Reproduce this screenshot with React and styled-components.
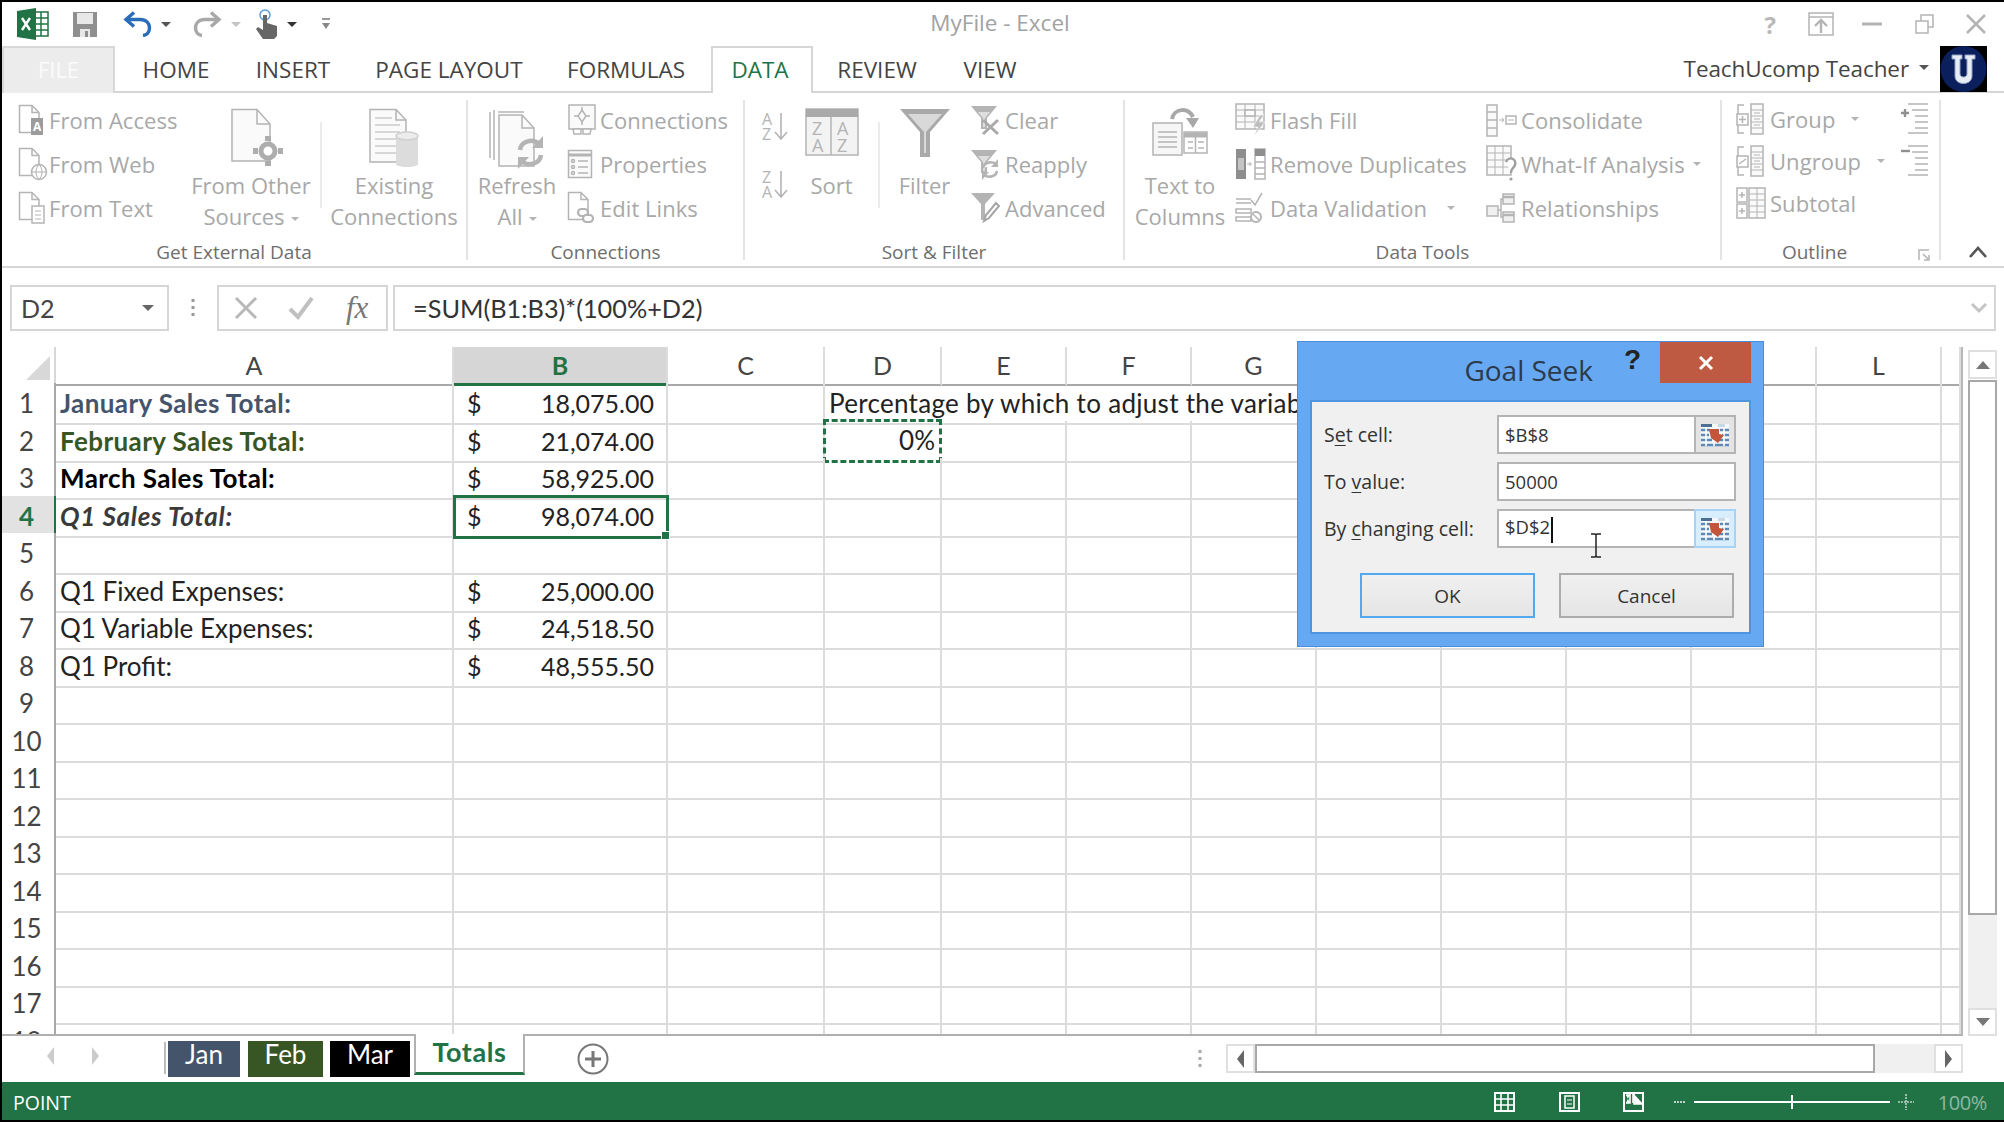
import React from "react";
import styled, { createGlobalStyle } from "styled-components";

const UI = `"Open Sans", "Noto Sans", sans-serif`;
const CELL = `Lato, "Open Sans", sans-serif`;
const GREEN = "#217346";
const GRAY = "#b4b4b4";

const COLS = ["A", "B", "C", "D", "E", "F", "G", "H", "I", "J", "K", "L", ""];
const WIDTHS = "54px 398px 214px 157px 117px 125px 125px 125px 125px 125px 125px 125px 125px 19px";

const Global = createGlobalStyle`
  html, body { margin: 0; padding: 0; background: #fff; overflow: hidden; }
`;

const Window = styled.div`
  position: relative;
  width: 2004px;
  height: 1122px;
  box-sizing: border-box;
  border-top: 2px solid #000;
  border-bottom: 2px solid #000;
  border-left: 2px solid #000;
  background: #fff;
  display: flex;
  flex-direction: column;
  font-family: ${UI};
  overflow: hidden;
`;

/* ---------- title bar ---------- */
const TitleBar = styled.div`
  height: 44px;
  display: grid;
  grid-template-columns: 1fr auto 1fr;
  align-items: center;
`;
const Qat = styled.div`
  display: flex;
  align-items: center;
  padding-left: 15px;
`;
const QatItem = styled.div`
  display: flex;
  margin-left: ${(p) => p.$gap || 0}px;
`;
const Mirror = styled.span`
  display: flex;
  transform: scaleX(-1);
`;
const DocTitle = styled.div`
  font-size: 22.5px;
  color: #a2a2a2;
  padding-right: 6px;
  margin-top: -3px;
`;
const WinControls = styled.div`
  display: flex;
  align-items: center;
  justify-content: flex-end;
  padding-right: 18px;
`;
const WinBtn = styled.div`
  display: flex;
  margin-left: ${(p) => p.$gap || 0}px;
  font-size: 24px;
  font-weight: 700;
  color: #b8b8b8;
`;

/* ---------- ribbon tabs ---------- */
const TabRow = styled.div`
  height: 47px;
  box-sizing: border-box;
  border-bottom: 2px solid #d6d6d6;
  display: flex;
  align-items: stretch;
`;
const FileTab = styled.div`
  width: 113px;
  box-sizing: border-box;
  height: 47px;
  background: #ececec;
  border: 2px solid #d8d8d8;
  border-bottom: none;
  color: #fbfbfb;
  font-size: 22px;
  line-height: 42px;
  text-align: center;
`;
const Tab = styled.div`
  width: ${(p) => p.$w}px;
  box-sizing: border-box;
  height: ${(p) => (p.$active ? 47 : 45)}px;
  padding-right: ${(p) => p.$pr || 0}px;
  text-align: center;
  font-size: 22.5px;
  line-height: ${(p) => (p.$active ? 43 : 47)}px;
  color: ${(p) => (p.$active ? GREEN : "#444")};
  background: #fff;
  border: ${(p) => (p.$active ? "2px solid #d6d6d6" : "none")};
  border-bottom: none;
  position: relative;
  z-index: 1;
`;
const User = styled.div`
  margin-left: auto;
  display: flex;
  align-items: center;
  height: 45px;
  font-size: 22.5px;
  letter-spacing: -0.1px;
  color: #444;
`;
const UserCaret = styled.span`
  width: 0;
  height: 0;
  margin: 0 11px 2px 10px;
  border-left: 5px solid transparent;
  border-right: 5px solid transparent;
  border-top: 5px solid #555;
`;
const Avatar = styled.div`
  width: 47px;
  height: 46px;
  margin-right: 17px;
  background: #000;
  display: flex;
`;

/* ---------- ribbon ---------- */
const Ribbon = styled.div`
  height: 175px;
  box-sizing: border-box;
  padding-top: 7px;
  border-bottom: 2px solid #d6d6d6;
  display: flex;
  align-items: flex-start;
`;
const Group = styled.div`
  width: ${(p) => p.$w}px;
  height: 160px;
  box-sizing: border-box;
  border-right: 2px solid #e4e4e4;
  display: flex;
  flex-direction: column;
  position: relative;
`;
const GroupBody = styled.div`
  height: 136px;
  display: flex;
  align-items: flex-start;
  padding-left: ${(p) => p.$pad || 0}px;
`;
const GroupLabel = styled.div`
  height: 24px;
  line-height: 32px;
  text-align: center;
  font-size: 19px;
  color: #6e6e6e;
  padding-right: ${(p) => p.$right || 0}px;
`;
const Launcher = styled.div`
  position: absolute;
  right: 9px;
  bottom: -1px;
  display: flex;
`;
const SmallCol = styled.div`
  width: ${(p) => p.$w}px;
  margin-left: ${(p) => p.$ml || 0}px;
  margin-top: -2px;
  flex-shrink: 0;
  display: flex;
  flex-direction: column;
`;
const SmallRow = styled.div`
  height: ${(p) => p.$h || 44}px;
  display: flex;
  align-items: center;
  white-space: nowrap;
  font-size: 22px;
  letter-spacing: 0.05px;
  color: #a8a8a8;
`;
const SmallIcon = styled.div`
  width: ${(p) => p.$w}px;
  flex-shrink: 0;
  display: flex;
`;
const Large = styled.div`
  width: ${(p) => p.$w}px;
  margin-left: ${(p) => p.$ml || 0}px;
  flex-shrink: 0;
  display: flex;
  flex-direction: column;
  align-items: center;
  font-size: 22px;
  line-height: 31px;
  color: #a8a8a8;
  text-align: center;
  white-space: nowrap;
`;
const LargeIcon = styled.div`
  height: 70px;
  padding: 8px 0 0 ${(p) => p.$shift || 0}px;
  box-sizing: border-box;
  display: flex;
  align-items: flex-start;
  justify-content: center;
`;
const VSep = styled.div`
  width: 2px;
  height: 86px;
  margin: 22px ${(p) => p.$r}px 0 ${(p) => p.$l}px;
  background: #ebebeb;
  flex-shrink: 0;
`;
const Caret = styled.span`
  display: inline-block;
  width: 0;
  height: 0;
  vertical-align: middle;
  margin-left: ${(p) => p.$ml ?? 6}px;
  border-left: ${(p) => p.$s || 4}px solid transparent;
  border-right: ${(p) => p.$s || 4}px solid transparent;
  border-top: ${(p) => p.$s || 4}px solid ${(p) => p.$c || "#b4b4b4"};
`;
const Collapse = styled.div`
  flex: 1;
  height: 160px;
  display: flex;
  align-items: flex-end;
  justify-content: center;
  padding-left: 10px;
  padding-bottom: 2px;
  box-sizing: border-box;
`;

/* ---------- formula bar ---------- */
const FormulaBar = styled.div`
  height: 79px;
  box-sizing: border-box;
  padding: 17px 8px 0 8px;
  display: flex;
  align-items: flex-start;
`;
const NameBox = styled.div`
  width: 159px;
  height: 46px;
  box-sizing: border-box;
  border: 2px solid #d6d6d6;
  display: flex;
  align-items: center;
  justify-content: space-between;
  padding: 0 13px 0 9px;
  font-family: ${CELL};
  font-size: 25px;
  color: #444;
`;
const Dots = styled.div`
  width: 48px;
  height: 46px;
  display: flex;
  align-items: center;
  justify-content: center;
`;
const FxBox = styled.div`
  width: 171px;
  height: 46px;
  box-sizing: border-box;
  border: 2px solid #d6d6d6;
  display: flex;
  align-items: center;
  padding-left: 15px;
  gap: 30px;
`;
const FxText = styled.span`
  font-family: "Liberation Serif", serif;
  font-style: italic;
  font-size: 31px;
  color: #777;
  margin-left: 2px;
`;
const FormulaInput = styled.div`
  flex: 1;
  height: 46px;
  margin-left: 5px;
  box-sizing: border-box;
  border: 2px solid #d6d6d6;
  display: flex;
  align-items: center;
  justify-content: space-between;
  padding: 0 7px 0 18px;
  font-family: ${CELL};
  font-size: 25.3px;
  color: #333;
`;

/* ---------- sheet ---------- */
const SheetArea = styled.div`
  height: 689px;
  display: flex;
`;
const Sheet = styled.div`
  width: 1961px;
  box-sizing: border-box;
  border-right: 2px solid #b8b8b8;
  border-bottom: 2px solid #b0b0b0;
  overflow: hidden;
  font-family: ${CELL};
  font-size: 26px;
  color: #222;
`;
const SheetRow = styled.div`
  display: grid;
  grid-template-columns: ${WIDTHS};
  height: ${(p) => p.$h || 37.5}px;
`;
const Corner = styled.div`
  border-bottom: 2px solid #a8a8a8;
  border-right: 2px solid #d8d8d8;
  display: flex;
  align-items: flex-end;
  justify-content: flex-end;
  padding: 0 4px 4px 0;
`;
const ColHead = styled.div`
  box-sizing: border-box;
  border-right: 2px solid #dcdcdc;
  border-bottom: ${(p) => (p.$on ? `3px solid ${GREEN}` : "2px solid #a8a8a8")};
  background: ${(p) => (p.$on ? "#d6d6d6" : "#fff")};
  color: ${(p) => (p.$on ? GREEN : "#444")};
  font-weight: ${(p) => (p.$on ? 700 : 400)};
  text-align: center;
  line-height: 36px;
  font-size: 25px;
`;
const RowHead = styled.div`
  box-sizing: border-box;
  border-right: 2px solid ${(p) => (p.$on ? GREEN : "#a8a8a8")};
  border-bottom: 2px solid #dcdcdc;
  background: ${(p) => (p.$on ? "#e2e2e2" : "#fff")};
  color: ${(p) => (p.$on ? GREEN : "#444")};
  font-weight: ${(p) => (p.$on ? 700 : 400)};
  text-align: center;
  line-height: 40px;
  padding-right: 3px;
`;
const Cell = styled.div`
  box-sizing: border-box;
  border-right: 2px solid #dcdcdc;
  border-bottom: 2px solid #dcdcdc;
  grid-column: ${(p) => (p.$span ? `span ${p.$span}` : "auto")};
  line-height: 40px;
  padding: 0 4px;
  white-space: nowrap;
  overflow: hidden;
  font-weight: ${(p) => (p.$bold ? 700 : 400)};
  font-style: ${(p) => (p.$italic ? "italic" : "normal")};
  letter-spacing: ${(p) => p.$ls || 0}px;
  color: ${(p) => p.$color || "#222"};
  text-align: ${(p) => p.$align || "left"};
`;
const MoneyCell = styled(Cell)`
  display: flex;
  justify-content: space-between;
  padding: 0 12px 0 13px;
  font-size: 25px;
  overflow: visible;
  position: relative;
  ${(p) =>
    p.$sel &&
    `
    outline: 3px solid ${GREEN};
    outline-offset: -2px;
    z-index: 2;
    &::after {
      content: "";
      position: absolute;
      right: -4px;
      bottom: -4px;
      width: 7px;
      height: 7px;
      background: ${GREEN};
      border: 1px solid #fff;
    }
  `}
`;
const CopyCell = styled(Cell)`
  border: 3px dashed ${GREEN};
  text-align: right;
  line-height: 37px;
  margin: -2px 0 0 -2px;
  width: calc(100% + 2px);
  height: calc(100% + 2px);
`;

const VScroll = styled.div`
  flex: 1;
  display: flex;
  flex-direction: column;
  padding: 3px 7px 0 5px;
`;
const ScrollBtn = styled.div`
  height: ${(p) => p.$h || 29}px;
  box-sizing: border-box;
  border: 2px solid #e0e0e0;
  display: flex;
  align-items: center;
  justify-content: center;
  flex-shrink: 0;
`;
const VThumb = styled.div`
  height: 535px;
  flex-shrink: 0;
  margin-top: 1px;
  box-sizing: border-box;
  border: 2px solid #a8a8a8;
  background: #fff;
`;
const VTrack = styled.div`
  flex: 1;
  background: #f0f0f0;
`;
const Tri = styled.span`
  width: 0;
  height: 0;
  ${(p) =>
    p.$dir === "up"
      ? `border-left:7px solid transparent;border-right:7px solid transparent;border-bottom:8px solid #777;`
      : p.$dir === "down"
      ? `border-left:7px solid transparent;border-right:7px solid transparent;border-top:8px solid #777;`
      : p.$dir === "left"
      ? `border-top:9px solid transparent;border-bottom:9px solid transparent;border-right:7px solid ${p.$c || "#666"};`
      : `border-top:9px solid transparent;border-bottom:9px solid transparent;border-left:7px solid ${p.$c || "#666"};`}
`;

/* ---------- sheet tabs ---------- */
const TabBar = styled.div`
  height: 46px;
  display: flex;
  align-items: flex-start;
  font-family: ${CELL};
`;
const NavArrows = styled.div`
  width: 162px;
  height: 40px;
  padding-left: 45px;
  box-sizing: border-box;
  display: flex;
  align-items: center;
  gap: 38px;
`;
const TabSep = styled.div`
  width: 2px;
  height: 32px;
  margin-top: 6px;
  background: #bbb;
`;
const SheetTab = styled.div`
  width: ${(p) => p.$w}px;
  height: 36px;
  margin: 5px 0 0 ${(p) => p.$ml}px;
  box-sizing: border-box;
  background: ${(p) => p.$bg};
  color: #fff;
  font-size: 26px;
  line-height: 27px;
  text-align: center;
`;
const ActiveTab = styled.div`
  width: 111px;
  height: 41px;
  margin: -2px 0 0 4px;
  box-sizing: border-box;
  background: #fff;
  border-left: 2px solid #b0b0b0;
  border-right: 2px solid #b0b0b0;
  border-bottom: 3px solid ${GREEN};
  color: ${GREEN};
  font-weight: 700;
  font-size: 27px;
  letter-spacing: 0.6px;
  line-height: 36px;
  text-align: center;
`;
const AddSheet = styled.div`
  margin: 7px 0 0 52px;
  display: flex;
`;
const HScrollWrap = styled.div`
  margin-left: auto;
  display: flex;
  align-items: center;
  height: 29px;
  margin-top: 8px;
  margin-right: 41px;
`;
const Grip = styled.div`
  display: flex;
  margin-right: 24px;
`;
const HBtn = styled.div`
  width: 29px;
  height: 29px;
  box-sizing: border-box;
  border: 2px solid #e0e0e0;
  display: flex;
  align-items: center;
  justify-content: center;
`;
const HThumb = styled.div`
  width: 620px;
  height: 29px;
  box-sizing: border-box;
  border: 2px solid #a8a8a8;
  background: #fff;
`;
const HTrack = styled.div`
  width: 59px;
  height: 29px;
  background: #f0f0f0;
`;

/* ---------- status bar ---------- */
const StatusBar = styled.div`
  flex: 1;
  background: ${GREEN};
  color: #fff;
  display: flex;
  align-items: center;
  padding: 2px 0 0 11px;
  font-size: 19.5px;
`;
const StatusRight = styled.div`
  margin-left: auto;
  display: flex;
  align-items: center;
  padding-right: 17px;
`;
const StatusIcon = styled.div`
  display: flex;
  margin-left: ${(p) => p.$gap || 0}px;
`;
const Slider = styled.div`
  width: 196px;
  height: 2px;
  margin-left: 8px;
  background: #fff;
  display: flex;
  align-items: center;
  justify-content: center;
`;
const SliderTick = styled.span`
  width: 2px;
  height: 14px;
  background: #fff;
`;
const Zoom = styled.div`
  margin-left: 24px;
  font-size: 20px;
  letter-spacing: -0.4px;
  color: #8fb8a2;
`;

/* ---------- goal seek dialog ---------- */
const Dialog = styled.div`
  position: absolute;
  left: 1295px;
  top: 339px;
  width: 467px;
  height: 306px;
  box-sizing: border-box;
  background: #66a9f2;
  border: 1px solid #4b8fdc;
  padding: 0 12px 12px 12px;
  display: flex;
  flex-direction: column;
  z-index: 5;
`;
const DialogHead = styled.div`
  height: 58px;
  flex-shrink: 0;
  display: flex;
  align-items: flex-start;
`;
const DialogTitle = styled.div`
  width: 283px;
  text-align: right;
  padding-top: 9px;
  white-space: nowrap;
  font-size: 28px;
  color: #2c3a4a;
`;
const DialogHelp = styled.div`
  margin: 0 0 0 31px;
  height: 36px;
  line-height: 36px;
  font-family: "Liberation Sans", sans-serif;
  font-size: 28px;
  font-weight: 700;
  color: #222;
`;
const DialogClose = styled.div`
  margin: 0 0 0 auto;
  width: 91px;
  height: 41px;
  background: #bd5a41;
  display: flex;
  align-items: center;
  justify-content: center;
`;
const DialogBody = styled.div`
  flex: 1;
  background: #f0f0f0;
  border: 2px solid #4f94e0;
  padding: 13px 13px 0 12px;
  display: flex;
  flex-direction: column;
  font-size: 19.5px;
  color: #333;
`;
const Field = styled.div`
  height: 39px;
  margin-bottom: 8px;
  display: flex;
  align-items: center;
`;
const FieldLabel = styled.div`
  width: 173px;
  flex-shrink: 0;
  u { text-underline-offset: 3px; }
`;
const FieldInput = styled.div`
  flex: 1;
  height: 39px;
  box-sizing: border-box;
  border: 2px solid #b4b4b4;
  background: #fff;
  display: flex;
  align-items: center;
  justify-content: space-between;
  padding-left: 6px;
  font-size: 18.5px;
  position: relative;
`;
const RefBtn = styled.div`
  width: 42px;
  height: 39px;
  margin: -2px -2px -2px 0;
  box-sizing: border-box;
  border: 2px solid ${(p) => (p.$on ? "#a5d2f5" : "#b4b4b4")};
  background: ${(p) => (p.$on ? "#d8eefd" : "#e4e4e4")};
  display: flex;
  align-items: center;
  justify-content: center;
`;
const TextCaret = styled.span`
  display: inline-block;
  width: 1.5px;
  height: 26px;
  background: #111;
  vertical-align: middle;
  margin-left: 1px;
`;
const IBeam = styled.div`
  position: absolute;
  left: 91px;
  top: 22px;
  display: flex;
  z-index: 2;
`;
const ButtonRow = styled.div`
  display: flex;
  gap: 24px;
  margin: 17px 0 0 36px;
`;
const DlgButton = styled.div`
  width: 175px;
  height: 45px;
  box-sizing: border-box;
  border: 2px solid ${(p) => (p.$primary ? "#54a9ee" : "#acacac")};
  background: linear-gradient(#f0f0f0, #e5e5e5);
  text-align: center;
  line-height: 43px;
  font-size: 19px;
  color: #333;
`;

/* ---------- icons ---------- */
const Ico = styled.svg`
  display: block;
  flex-shrink: 0;
  overflow: visible;
  fill: none;
  stroke: ${(p) => p.$c || GRAY};
  stroke-width: 1.5;
`;
const I = ({ w, h, children, c }) => (
  <Ico width={w} height={h} viewBox={`0 0 ${w} ${h}`} $c={c}>
    {children}
  </Ico>
);
const Doc = (
  <>
    <path d="M1.5 1.5H14L21 8.5V28.5H1.5Z" fill="#fff" />
    <path d="M14 1.5V8.5H21" />
  </>
);

const ExcelLogo = () => (
  <svg width="32" height="32" viewBox="0 0 32 32">
    <rect x="12" y="4" width="19" height="24" fill="#fff" stroke="#217346" strokeWidth="1.5" />
    <path d="M17 4V28M24 4V28M12 10H31M12 16H31M12 22H31" stroke="#217346" strokeWidth="1.5" />
    <path d="M0 3L19 0V32L0 29Z" fill="#217346" />
    <path d="M5 10L13 22M13 10L5 22" stroke="#fff" strokeWidth="2.4" />
  </svg>
);
const SaveIcon = () => (
  <svg width="24" height="25" viewBox="0 0 24 25">
    <path d="M0 0H24V25H0Z" fill="#8f8f8f" />
    <rect x="4" y="1" width="16" height="11" fill="#e8e8e8" />
    <rect x="7" y="17" width="10" height="8" fill="#e8e8e8" />
    <rect x="12" y="19" width="3" height="6" fill="#8f8f8f" />
  </svg>
);
const UndoIcon = ({ c }) => (
  <svg width="29" height="26" viewBox="0 0 29 26" fill="none" stroke={c} strokeWidth="3.4">
    <path d="M11 1.5L3 8.5L11 15.5" />
    <path d="M3 8.5H17C23 8.5 26.5 12 26.5 17C26.5 21 24 24 20 24.5" />
  </svg>
);
const TouchIcon = () => (
  <svg width="24" height="30" viewBox="0 0 24 30">
    <circle cx="10" cy="6" r="5" fill="none" stroke="#5b9bd5" strokeWidth="1.5" />
    <path d="M8 6H12V14L22 17V27L19 30H8L1 20L3 18L8 21Z" fill="#666" />
  </svg>
);
const QatMore = () => (
  <svg width="10" height="14" viewBox="0 0 10 14">
    <path d="M1 2H9" stroke="#777" strokeWidth="1.5" />
    <path d="M1 6H9L5 12Z" fill="#888" />
  </svg>
);

const FromAccess = () => (
  <I w={30} h={32}>
    {Doc}
    <rect x="13" y="14" width="12" height="17" fill="#9c9c9c" stroke="none" />
    <text x="15" y="27" fontSize="12" fontWeight="700" fill="#fff" stroke="none" fontFamily="Open Sans">A</text>
  </I>
);
const FromWeb = () => (
  <I w={30} h={34}>
    {Doc}
    <circle cx="21" cy="25" r="7.5" fill="#fff" />
    <path d="M13.5 25H28.5M21 17.5C17 21 17 29 21 32.5C25 29 25 21 21 17.5" strokeWidth="1" />
  </I>
);
const FromText = () => (
  <I w={30} h={34}>
    {Doc}
    <rect x="14" y="15" width="12" height="17" fill="#fff" />
    <path d="M17 20H23M17 24H23M17 28H23" strokeWidth="1" />
  </I>
);
const OtherSources = () => (
  <I w={54} h={60}>
    <path d="M2 1.5H27L40 16V53H2Z" fill="#fafafa" />
    <path d="M27 1.5V16H40" />
    <circle cx="38" cy="43" r="7" fill="#fff" stroke="#adadad" strokeWidth="5" />
    <path d="M38 28V33M38 53V58M23 43H28M48 43H53" stroke="#adadad" strokeWidth="6" />
  </I>
);
const Existing = () => (
  <I w={52} h={60}>
    <path d="M2 1.5H28L38 12V54H2Z" fill="#fafafa" />
    <path d="M28 1.5V12H38" />
    <path d="M7 10H24M7 17H32M7 24H32M7 31H32M7 38H28M7 45H28" strokeWidth="1.2" />
    <path d="M28 28C28 23 50 23 50 28V56C50 60 28 60 28 56Z" fill="#dcdcdc" stroke="none" />
    <ellipse cx="39" cy="28" rx="11" ry="4" fill="#ececec" stroke="#d0d0d0" />
  </I>
);
const RefreshAll = () => (
  <I w={58} h={62}>
    <path d="M2 4V50M6 2V52" />
    <path d="M10 4H36" />
    <path d="M11 7H34L46 20V58H11Z" fill="#fafafa" />
    <path d="M34 7V20H46" />
    <path d="M32 42C33 33 45 30 51 36" stroke="#b4b4b4" strokeWidth="4.5" />
    <path d="M55 28V40H44Z" fill="#b4b4b4" stroke="none" />
    <path d="M53 47C52 56 40 59 34 53" stroke="#b4b4b4" strokeWidth="4.5" />
    <path d="M30 61V49H41Z" fill="#b4b4b4" stroke="none" />
  </I>
);
const ConnIcon = () => (
  <I w={30} h={34}>
    <rect x="2" y="2" width="26" height="24" fill="#fafafa" />
    <path d="M15 7L19 13L15 19L11 13Z" />
    <path d="M15 4V7M15 19V22M7 13H11M19 13H23" />
    <path d="M6 26H14V31H7ZM16 26H24L23 31H16Z" fill="#fff" />
  </I>
);
const PropsIcon = () => (
  <I w={26} h={30}>
    <rect x="1.5" y="1.5" width="23" height="27" fill="#fafafa" />
    <path d="M1.5 6H24.5" strokeWidth="3" />
    <path d="M11 12H21M11 18H21M11 24H21" />
    <circle cx="6" cy="12" r="1.5" />
    <circle cx="6" cy="18" r="1.5" />
    <circle cx="6" cy="24" r="1.5" />
  </I>
);
const LinksIcon = () => (
  <I w={28} h={34}>
    {Doc}
    <rect x="11" y="18" width="10" height="7" rx="3.5" fill="#fff" strokeWidth="2.2" />
    <rect x="16" y="24" width="10" height="7" rx="3.5" fill="#fff" strokeWidth="2.2" />
  </I>
);
const SortLetters = ({ t, b }) => (
  <I w={27} h={30}>
    <text x="0" y="13" fontSize="16" fill="#b4b4b4" stroke="none" fontFamily="Open Sans">{t}</text>
    <text x="0" y="28" fontSize="16" fill="#b4b4b4" stroke="none" fontFamily="Open Sans">{b}</text>
    <path d="M19 1V26M13 20L19 27L25 20" strokeWidth="1.6" />
  </I>
);
const SortIcon = () => (
  <I w={54} h={48}>
    <rect x="1" y="1" width="52" height="46" fill="#f3f3f3" />
    <rect x="1" y="1" width="52" height="8" fill="#aaaaaa" stroke="none" />
    <path d="M26 9V47" />
    <text x="7" y="27" fontSize="18" fill="#b4b4b4" stroke="none" fontFamily="Open Sans">Z</text>
    <text x="7" y="44" fontSize="18" fill="#b4b4b4" stroke="none" fontFamily="Open Sans">A</text>
    <text x="32" y="27" fontSize="18" fill="#b4b4b4" stroke="none" fontFamily="Open Sans">A</text>
    <text x="32" y="44" fontSize="18" fill="#b4b4b4" stroke="none" fontFamily="Open Sans">Z</text>
  </I>
);
const FunnelLarge = () => (
  <I w={52} h={50}>
    <path d="M1 1H51L31 24V49H21V24Z" fill="#a9a9a9" stroke="none" />
    <path d="M9 6H43L27 24V45H25V24Z" fill="#d9d9d9" stroke="none" />
  </I>
);
const SmallFunnel = (
  <>
    <path d="M1 1H27L17 13V24H11V13Z" fill="#b4b4b4" stroke="none" />
    <path d="M8 7H20L15 13V22H13V13Z" fill="#dedede" stroke="none" />
  </>
);
const ClearIcon = () => (
  <I w={30} h={30}>
    {SmallFunnel}
    <path d="M13 15L28 29M28 15L13 29" strokeWidth="3" stroke="#aaa" />
  </I>
);
const ReapplyIcon = () => (
  <I w={30} h={30}>
    {SmallFunnel}
    <path d="M13 19C14 13 22 12 26 15M27 22C26 28 18 29 14 26" stroke="#b4b4b4" strokeWidth="2.6" fill="#fff" />
    <path d="M28 10V18H21ZM12 31V23H19Z" fill="#b4b4b4" stroke="none" />
  </I>
);
const AdvancedIcon = () => (
  <I w={30} h={32}>
    <path d="M1 1H25L15 12V28H11V12Z" fill="#b4b4b4" stroke="none" />
    <path d="M14 29L16 23L26 11L29 14L19 26Z" fill="#fff" stroke="#a5a5a5" strokeWidth="2" />
  </I>
);
const TextColumns = () => (
  <I w={56} h={48}>
    <path d="M1 15H30V47H1Z" fill="#f6f6f6" />
    <path d="M6 24H25M6 29H25M6 34H25M6 39H25" />
    <path d="M20 11C22 0 36 -1 41 9" strokeWidth="4" stroke="#a8a8a8" />
    <path d="M34 10H47L41 20Z" fill="#a8a8a8" stroke="none" />
    <rect x="32" y="24" width="23" height="21" fill="#fff" />
    <path d="M32 27H55" strokeWidth="5" />
    <path d="M43.5 24V45M36 34H41M46 34H52M36 40H41M46 40H52" />
  </I>
);
const FlashFill = () => (
  <I w={30} h={34}>
    <rect x="1" y="1" width="28" height="25" fill="#fafafa" />
    <path d="M1 7H29M1 13H29M1 19H29M10 1V26M20 1V26" strokeWidth="1" />
    <rect x="10" y="7" width="10" height="6" fill="#fff" />
    <path d="M25 12L18 24H23L19 33L30 19H24L29 12Z" fill="#bdbdbd" stroke="#fff" strokeWidth="0.6" />
  </I>
);
const RemoveDup = () => (
  <I w={30} h={32}>
    <rect x="1" y="1" width="10" height="30" fill="#8e8e8e" stroke="none" />
    <rect x="3" y="10" width="6" height="12" fill="#c4c4c4" stroke="none" />
    <path d="M12 16H17M15 14V18" strokeWidth="1" />
    <rect x="20" y="1" width="10" height="30" fill="#fff" />
    <rect x="20" y="1" width="10" height="7" fill="#8e8e8e" stroke="none" />
    <path d="M20 14H30M20 20H30M20 26H30" />
  </I>
);
const DataVal = () => (
  <I w={28} h={32}>
    <path d="M1 7H16M1 11H16" />
    <path d="M16 8L20 13L27 1" strokeWidth="1.5" />
    <rect x="1" y="17" width="15" height="4" />
    <rect x="1" y="25" width="15" height="4" />
    <circle cx="21" cy="25" r="5" strokeWidth="2" />
    <path d="M18 22L24 28" strokeWidth="1.5" />
  </I>
);
const Consolidate = () => (
  <I w={31} h={33}>
    <rect x="1" y="1" width="10" height="31" fill="#fafafa" />
    <path d="M1 8H11M1 16H11M1 24H11" />
    <path d="M13 16H18M16 14L18 16L16 18" strokeWidth="1" />
    <rect x="20" y="12" width="10" height="8" />
    <path d="M22 16H28" strokeWidth="1" />
  </I>
);
const WhatIf = () => (
  <I w={31} h={38}>
    <rect x="1" y="1" width="24" height="29" fill="#fafafa" />
    <path d="M1 8H25M1 15H25M1 22H25M9 1V30M17 1V30" strokeWidth="1" />
    <path d="M20 17C22 11 31 13 29 20C28 23 25 23 25 28" stroke="#9f9f9f" strokeWidth="2.4" fill="#fff" />
    <circle cx="25" cy="34" r="1.6" fill="#9f9f9f" stroke="none" />
  </I>
);
const RelIcon = () => (
  <I w={30} h={30}>
    <rect x="1" y="13" width="11" height="10" fill="#f0f0f0" />
    <rect x="17" y="1" width="11" height="10" fill="#f0f0f0" />
    <rect x="17" y="19" width="11" height="10" fill="#f0f0f0" />
    <path d="M12 17H15V6H17M15 17V24H17" />
    <path d="M17 4H28M17 22H28" strokeWidth="2.5" />
  </I>
);
const GroupIcon = ({ dash }) => (
  <I w={28} h={32}>
    <path d="M8 2H2V30H8" />
    <rect x="1" y="11" width="11" height="11" fill="#fff" />
    <path d={dash ? "M3 19L10 14" : "M3 16.5H10M6.5 13V20"} />
    <rect x="15" y="1" width="12" height="30" fill="#fafafa" />
    <path d="M15 7H27M15 13H27M15 19H27M15 25H27M18 10H24M18 16H24M18 22H24" strokeWidth="1" />
  </I>
);
const SubtotalIcon = () => (
  <I w={30} h={32}>
    <rect x="1" y="1" width="10" height="14" fill="#fff" />
    <rect x="1" y="17" width="10" height="14" fill="#fff" />
    <path d="M3 8H9M6 5V11M3 24H9M6 21V27" />
    <rect x="13" y="1" width="16" height="30" fill="#fafafa" />
    <path d="M13 7H29M13 13H29M13 19H29M13 25H29M21 1V31" strokeWidth="1" />
  </I>
);
const DetailIcon = ({ plus }) => (
  <I w={29} h={32}>
    <path d={plus ? "M1 10H9M5 6V14" : "M1 6H10"} stroke="#8f8f8f" strokeWidth="2.4" />
    <path d="M8 1H28M12 7H28M15 13H28M15 19H28M15 25H28M8 30H28" />
  </I>
);
const LauncherIcon = () => (
  <I w={12} h={12}>
    <path d="M1 11V1H11" />
    <path d="M5 5L10 10M11 6V11H6" />
  </I>
);
const RefIcon = () => (
  <svg width="30" height="26" viewBox="0 0 30 26">
    <rect x="1" y="2" width="28" height="22" fill="#f4f8fb" />
    <path d="M1 8H10M20 8H29M1 13H9M22 13H29M1 18H12M19 18H29M1 23H29" stroke="#5f8ab5" strokeWidth="2.4" />
    <path d="M6 3V24M24 3V24M14 19V24" stroke="#fff" strokeWidth="1.6" />
    <rect x="1" y="2" width="11" height="3" fill="#4d6f94" />
    <rect x="18" y="2" width="7" height="3" fill="#c9d8e6" />
    <path d="M9 7H19V12L24 13L18 21L11 16Z" fill="#c4543a" />
  </svg>
);
const Avatarsvg = () => (
  <svg width="47" height="46" viewBox="0 0 47 46">
    <ellipse cx="23.5" cy="23" rx="23" ry="23" fill="#0b1f5c" />
    <path d="M12 9H22V13H20V28C20 32 27 32 27 28V13H25V9H35V13H32V30C32 40 15 40 15 30V13H12Z" fill="#e8edf5" stroke="#8fa1c5" />
  </svg>
);

const Money = ({ v, sel }) => (
  <MoneyCell $sel={sel}>
    <span>$</span>
    <span>{v}</span>
  </MoneyCell>
);

const FIXED = {
  1: ["January Sales Total:", { $bold: true, $ls: 0.4, $color: "#44546a" }, "18,075.00"],
  2: ["February Sales Total:", { $bold: true, $ls: 0.4, $color: "#375623" }, "21,074.00"],
  3: ["March Sales Total:", { $bold: true, $ls: 0.4, $color: "#000" }, "58,925.00"],
  4: ["Q1 Sales Total:", { $bold: true, $italic: true, $ls: 0.7, $color: "#3a3a3a" }, "98,074.00"],
  6: ["Q1 Fixed Expenses:", {}, "25,000.00"],
  7: ["Q1 Variable Expenses:", {}, "24,518.50"],
  8: ["Q1 Profit:", {}, "48,555.50"],
};

function Rows() {
  const rows = [];
  for (let n = 1; n <= 18; n++) {
    const d = FIXED[n];
    rows.push(
      <SheetRow key={n}>
        <RowHead $on={n === 4}>{n}</RowHead>
        <Cell {...(d ? d[1] : {})}>{d ? d[0] : ""}</Cell>
        {d ? <Money v={d[2]} sel={n === 4} /> : <Cell />}
        <Cell />
        {n === 1 ? (
          <Cell $span={6} $ls={0.3}>Percentage by which to adjust the variable expenses</Cell>
        ) : n === 2 ? (
          <CopyCell>0%</CopyCell>
        ) : (
          <Cell />
        )}
        {n !== 1 && Array.from({ length: 5 }, (_, i) => <Cell key={i} />)}
        <Cell />
        <Cell />
        <Cell />
        <Cell />
      </SheetRow>
    );
  }
  return rows;
}

export default function App() {
  return (
    <Window>
      <Global />
      <TitleBar>
        <Qat>
          <QatItem><ExcelLogo /></QatItem>
          <QatItem $gap={24}><SaveIcon /></QatItem>
          <QatItem $gap={26}><UndoIcon c="#2b6cb8" /></QatItem>
          <Caret $ml={9} $s={5} $c="#555" />
          <QatItem $gap={22}>
            <Mirror><UndoIcon c="#a8a8a8" /></Mirror>
          </QatItem>
          <Caret $ml={9} $s={5} $c="#c4c4c4" />
          <QatItem $gap={14}><TouchIcon /></QatItem>
          <Caret $ml={8} $s={5} $c="#333" />
          <QatItem $gap={24}><QatMore /></QatItem>
        </Qat>
        <DocTitle>MyFile - Excel</DocTitle>
        <WinControls>
          <WinBtn>?</WinBtn>
          <WinBtn $gap={32}>
            <I w={26} h={24}>
              <rect x="1" y="1" width="24" height="22" />
              <path d="M1 5H25" />
              <path d="M13 21V9M7 14L13 8L19 14" strokeWidth="2.4" />
            </I>
          </WinBtn>
          <WinBtn $gap={28}>
            <I w={20} h={4}><path d="M0 2H20" strokeWidth="3" /></I>
          </WinBtn>
          <WinBtn $gap={33}>
            <I w={19} h={20}>
              <rect x="1" y="7" width="12" height="12" />
              <path d="M6 7V1H18V13H13" />
            </I>
          </WinBtn>
          <WinBtn $gap={32}>
            <I w={20} h={20}><path d="M1 1L19 19M19 1L1 19" strokeWidth="2.6" /></I>
          </WinBtn>
        </WinControls>
      </TitleBar>

      <TabRow>
        <FileTab>FILE</FileTab>
        <Tab $w={122}>HOME</Tab>
        <Tab $w={112}>INSERT</Tab>
        <Tab $w={200}>PAGE LAYOUT</Tab>
        <Tab $w={162} $pr={8}>FORMULAS</Tab>
        <Tab $w={102} $pr={4} $active>DATA</Tab>
        <Tab $w={128}>REVIEW</Tab>
        <Tab $w={98}>VIEW</Tab>
        <User>
          TeachUcomp Teacher
          <UserCaret />
          <Avatar><Avatarsvg /></Avatar>
        </User>
      </TabRow>

      <Ribbon>
        <Group $w={466}>
          <GroupBody $pad={16}>
            <SmallCol $w={172}>
              <SmallRow><SmallIcon $w={31}><FromAccess /></SmallIcon>From Access</SmallRow>
              <SmallRow><SmallIcon $w={31}><FromWeb /></SmallIcon>From Web</SmallRow>
              <SmallRow><SmallIcon $w={31}><FromText /></SmallIcon>From Text</SmallRow>
            </SmallCol>
            <Large $w={122}>
              <LargeIcon $shift={12}><OtherSources /></LargeIcon>
              <span>From Other</span>
              <span>Sources<Caret /></span>
            </Large>
            <VSep $l={8} $r={8} />
            <Large $w={128}>
              <LargeIcon><Existing /></LargeIcon>
              <span>Existing</span>
              <span>Connections</span>
            </Large>
          </GroupBody>
          <GroupLabel>Get External Data</GroupLabel>
        </Group>

        <Group $w={277}>
          <GroupBody>
            <Large $w={78} $ml={10}>
              <LargeIcon><RefreshAll /></LargeIcon>
              <span>Refresh</span>
              <span>All<Caret /></span>
            </Large>
            <SmallCol $w={170} $ml={11}>
              <SmallRow><SmallIcon $w={33}><ConnIcon /></SmallIcon>Connections</SmallRow>
              <SmallRow><SmallIcon $w={33}><PropsIcon /></SmallIcon>Properties</SmallRow>
              <SmallRow><SmallIcon $w={33}><LinksIcon /></SmallIcon>Edit Links</SmallRow>
            </SmallCol>
          </GroupBody>
          <GroupLabel>Connections</GroupLabel>
        </Group>

        <Group $w={380}>
          <GroupBody $pad={17}>
            <SmallCol $w={43}>
              <SmallRow $h={58}><SortLetters t="A" b="Z" /></SmallRow>
              <SmallRow $h={58}><SortLetters t="Z" b="A" /></SmallRow>
            </SmallCol>
            <Large $w={53}>
              <LargeIcon><SortIcon /></LargeIcon>
              <span>Sort</span>
            </Large>
            <VSep $l={20} $r={18} />
            <Large $w={53}>
              <LargeIcon><FunnelLarge /></LargeIcon>
              <span>Filter</span>
            </Large>
            <SmallCol $w={150} $ml={19}>
              <SmallRow><SmallIcon $w={35}><ClearIcon /></SmallIcon>Clear</SmallRow>
              <SmallRow><SmallIcon $w={35}><ReapplyIcon /></SmallIcon>Reapply</SmallRow>
              <SmallRow><SmallIcon $w={35}><AdvancedIcon /></SmallIcon>Advanced</SmallRow>
            </SmallCol>
          </GroupBody>
          <GroupLabel>Sort &amp; Filter</GroupLabel>
        </Group>

        <Group $w={597}>
          <GroupBody>
            <Large $w={90} $ml={10}>
              <LargeIcon><TextColumns /></LargeIcon>
              <span>Text to</span>
              <span>Columns</span>
            </Large>
            <SmallCol $w={251} $ml={10}>
              <SmallRow><SmallIcon $w={35}><FlashFill /></SmallIcon>Flash Fill</SmallRow>
              <SmallRow><SmallIcon $w={35}><RemoveDup /></SmallIcon>Remove Duplicates</SmallRow>
              <SmallRow><SmallIcon $w={35}><DataVal /></SmallIcon>Data Validation<Caret $ml={20} /></SmallRow>
            </SmallCol>
            <SmallCol $w={220}>
              <SmallRow><SmallIcon $w={35}><Consolidate /></SmallIcon>Consolidate</SmallRow>
              <SmallRow><SmallIcon $w={35}><WhatIf /></SmallIcon>What-If Analysis<Caret $ml={8} /></SmallRow>
              <SmallRow><SmallIcon $w={35}><RelIcon /></SmallIcon>Relationships</SmallRow>
            </SmallCol>
          </GroupBody>
          <GroupLabel>Data Tools</GroupLabel>
        </Group>

        <Group $w={219}>
          <GroupBody $pad={14}>
            <SmallCol $w={164}>
              <SmallRow $h={42}><SmallIcon $w={34}><GroupIcon /></SmallIcon>Group<Caret $ml={16} /></SmallRow>
              <SmallRow $h={42}><SmallIcon $w={34}><GroupIcon dash /></SmallIcon>Ungroup<Caret $ml={16} /></SmallRow>
              <SmallRow $h={42}><SmallIcon $w={34}><SubtotalIcon /></SmallIcon>Subtotal</SmallRow>
            </SmallCol>
            <SmallCol $w={30}>
              <SmallRow $h={42}><DetailIcon plus /></SmallRow>
              <SmallRow $h={42}><DetailIcon /></SmallRow>
            </SmallCol>
          </GroupBody>
          <GroupLabel $right={32}>Outline</GroupLabel>
          <Launcher><LauncherIcon /></Launcher>
        </Group>

        <Collapse>
          <I w={18} h={12} c="#555"><path d="M1 11L9 2L17 11" strokeWidth="2.6" /></I>
        </Collapse>
      </Ribbon>

      <FormulaBar>
        <NameBox>D2<Caret $s={6} $c="#666" /></NameBox>
        <Dots>
          <I w={4} h={20} c="#999"><path d="M2 1V4M2 8V11M2 15V18" strokeWidth="3" /></I>
        </Dots>
        <FxBox>
          <I w={24} h={24} c="#b8b8b8"><path d="M2 2L22 22M22 2L2 22" strokeWidth="3" /></I>
          <I w={26} h={24} c="#c0c0c0"><path d="M2 13L10 21L24 2" strokeWidth="4" /></I>
          <FxText>fx</FxText>
        </FxBox>
        <FormulaInput>
          =SUM(B1:B3)*(100%+D2)
          <I w={16} h={10} c="#c4c4c4"><path d="M1 1L8 8L15 1" strokeWidth="3" /></I>
        </FormulaInput>
      </FormulaBar>

      <SheetArea>
        <Sheet>
          <SheetRow $h={36}>
            <Corner>
              <I w={24} h={24}><path d="M24 0V24H0Z" fill="#d8d8d8" stroke="none" /></I>
            </Corner>
            {COLS.map((c, i) => (
              <ColHead key={i} $on={c === "B"}>{c}</ColHead>
            ))}
          </SheetRow>
          <Rows />
        </Sheet>
        <VScroll>
          <ScrollBtn><Tri $dir="up" /></ScrollBtn>
          <VThumb />
          <VTrack />
          <ScrollBtn $h={28}><Tri $dir="down" /></ScrollBtn>
        </VScroll>
      </SheetArea>

      <TabBar>
        <NavArrows>
          <Tri $dir="left" $c="#ccc" />
          <Tri $dir="right" $c="#ccc" />
        </NavArrows>
        <TabSep />
        <SheetTab $w={72} $bg="#44546a" $ml={2}>Jan</SheetTab>
        <SheetTab $w={75} $bg="#375623" $ml={8}>Feb</SheetTab>
        <SheetTab $w={80} $bg="#000" $ml={7}>Mar</SheetTab>
        <ActiveTab>Totals</ActiveTab>
        <AddSheet>
          <svg width="32" height="32" viewBox="0 0 32 32" fill="none" stroke="#777">
            <circle cx="16" cy="16" r="14.5" strokeWidth="2" />
            <path d="M16 8V24M8 16H24" strokeWidth="3" />
          </svg>
        </AddSheet>
        <HScrollWrap>
          <Grip>
            <I w={4} h={20} c="#aaa"><path d="M2 1V4M2 8V11M2 15V18" strokeWidth="3" /></I>
          </Grip>
          <HBtn><Tri $dir="left" /></HBtn>
          <HThumb />
          <HTrack />
          <HBtn><Tri $dir="right" /></HBtn>
        </HScrollWrap>
      </TabBar>

      <StatusBar>
        POINT
        <StatusRight>
          <StatusIcon>
            <I w={21} h={20} c="#fff">
              <rect x="1" y="1" width="19" height="18" strokeWidth="2" />
              <path d="M7 1V19M14 1V19M1 7H20M1 13H20" strokeWidth="1.6" />
            </I>
          </StatusIcon>
          <StatusIcon $gap={44}>
            <I w={21} h={20} c="#fff">
              <rect x="1" y="1" width="19" height="18" strokeWidth="2" />
              <rect x="6" y="4" width="9" height="12" strokeWidth="1.5" />
              <path d="M8 8H13M8 12H13" strokeWidth="1.2" />
            </I>
          </StatusIcon>
          <StatusIcon $gap={43}>
            <I w={21} h={20} c="#fff">
              <path d="M1 1H20V19H1Z" strokeWidth="2" />
              <path d="M3 11H7V2M10 11V2M3 3H7V11M11 2V12H20" strokeWidth="1.6" fill="#fff" />
            </I>
          </StatusIcon>
          <StatusIcon $gap={30}>
            <I w={12} h={2} c="#bcd4c7"><path d="M0 1H12" strokeWidth="2" strokeDasharray="2 1" /></I>
          </StatusIcon>
          <Slider><SliderTick /></Slider>
          <StatusIcon $gap={8}>
            <I w={16} h={18} c="#bcd4c7"><path d="M8 1V17M0 9H16" strokeWidth="1.6" strokeDasharray="2 1" /></I>
          </StatusIcon>
          <Zoom>100%</Zoom>
        </StatusRight>
      </StatusBar>

      <Dialog>
        <DialogHead>
          <DialogTitle>Goal Seek</DialogTitle>
          <DialogHelp>?</DialogHelp>
          <DialogClose>
            <I w={16} h={16} c="#fff"><path d="M2 2L14 14M14 2L2 14" strokeWidth="3" /></I>
          </DialogClose>
        </DialogHead>
        <DialogBody>
          <Field>
            <FieldLabel>S<u>e</u>t cell:</FieldLabel>
            <FieldInput>$B$8<RefBtn><RefIcon /></RefBtn></FieldInput>
          </Field>
          <Field>
            <FieldLabel>To <u>v</u>alue:</FieldLabel>
            <FieldInput>50000</FieldInput>
          </Field>
          <Field>
            <FieldLabel>By <u>c</u>hanging cell:</FieldLabel>
            <FieldInput>
              <span>$D$2<TextCaret /></span>
              <IBeam>
                <I w={12} h={25} c="#222">
                  <path d="M1 1H5L6 2L7 1H11M6 2V23M1 24H5L6 23L7 24H11" strokeWidth="1.5" />
                </I>
              </IBeam>
              <RefBtn $on><RefIcon /></RefBtn>
            </FieldInput>
          </Field>
          <ButtonRow>
            <DlgButton $primary>OK</DlgButton>
            <DlgButton>Cancel</DlgButton>
          </ButtonRow>
        </DialogBody>
      </Dialog>
    </Window>
  );
}
